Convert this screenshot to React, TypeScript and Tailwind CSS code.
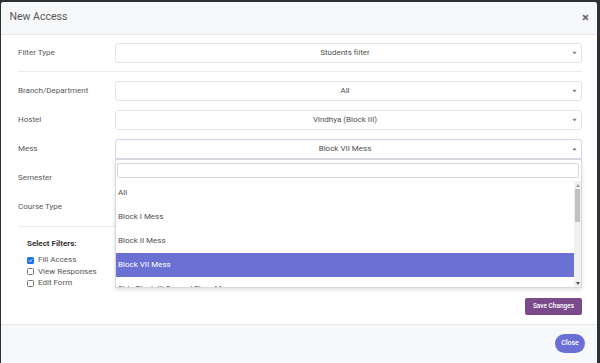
import React from 'react';

const Caret = ({ up = false }: { up?: boolean }) => (
  <svg width="5" height="3" viewBox="0 0 5 3" className="absolute right-[4px] top-1/2 -translate-y-1/2">
    <path d={up ? 'M0 3 L2.5 0 L5 3 Z' : 'M0 0 L2.5 3 L5 0 Z'} fill="#888" />
  </svg>
);

function Select({ value, open = false }: { value?: string; open?: boolean }) {
  return (
    <div
      className={`relative flex h-[20px] flex-1 items-center justify-center rounded-[3px] border bg-white pr-[7px] text-[8px] text-[#505050] ${
        open ? 'rounded-b-none border-[#d4d4ec]' : 'border-[#e3e3ee]'
      }`}
    >
      {value}
      <Caret up={open} />
    </div>
  );
}

function Row({ label, children }: { label: string; children: React.ReactNode }) {
  return (
    <div className="flex h-[20px] items-center">
      <div className="w-[97px] text-[8px] text-[#595959]">{label}</div>
      {children}
    </div>
  );
}

function Check({ label, checked = false }: { label: string; checked?: boolean }) {
  return (
    <div className="flex h-[11.5px] items-center gap-[4px]">
      {checked ? (
        <span className="flex h-[7px] w-[7px] items-center justify-center rounded-[1.5px] bg-[#1f74e8]">
          <svg width="5" height="5" viewBox="0 0 10 10">
            <path d="M2 5.2 L4.2 7.4 L8.2 2.8" stroke="white" strokeWidth="1.8" fill="none" />
          </svg>
        </span>
      ) : (
        <span className="h-[7px] w-[7px] rounded-[1.5px] border border-[#767676] bg-white" />
      )}
      <span className="text-[8px] text-[#555]">{label}</span>
    </div>
  );
}

const messes = ['All', 'Block I Mess', 'Block II Mess', 'Block VII Mess', 'Side Block III Second Floor Mess'];

export default function App() {
  return (
    <div className="h-[363px] w-[600px] overflow-hidden bg-[#2f3033] pl-px pt-[2px] font-['Roboto',sans-serif]">
      <div className="flex h-[400px] w-[596px] flex-col rounded-[3px] bg-white">
        <header className="flex h-[33px] shrink-0 items-center justify-between rounded-t-[3px] border-b border-[#e6e8ec] bg-[#f7f8fa] pb-[2px] pl-[8.5px] pr-[7px]">
          <h1 className="text-[10.5px] text-[#555]">New Access</h1>
          <svg width="7" height="7" viewBox="0 0 10 10" className="mr-px">
            <path d="M1.5 1.5 L8.5 8.5 M8.5 1.5 L1.5 8.5" stroke="#6f6f6f" strokeWidth="2.6" />
          </svg>
        </header>

        <div className="flex flex-col pb-[9px] pl-[17px] pr-[15px] pt-[8px]">
          <Row label="Filter Type">
            <Select value="Students filter" />
          </Row>
          <div className="mb-[9px] mt-[8px] h-px bg-[#e9ebef]" />

          <div className="flex flex-col gap-[9px]">
            <Row label="Branch/Department">
              <Select value="All" />
            </Row>
            <Row label="Hostel">
              <Select value="Vindhya (Block III)" />
            </Row>
            <div className="relative z-10">
              <Row label="Mess">
                <div className="relative flex-1 self-stretch">
                  <Select value="Block VII Mess" open />
                  <div className="absolute left-0 right-0 top-[20px] flex h-[129px] flex-col border border-[#d9d9d9] bg-white shadow-[0_2px_4px_rgba(0,0,0,0.12)]">
                    <div className="pb-[3px] pl-px pr-[2px] pt-[3px]">
                      <div className="h-[15px] rounded-[2px] border border-[#d6d6d6]" />
                    </div>
                    <div className="flex min-h-0 flex-1">
                      <ul className="flex-1 overflow-hidden">
                        {messes.map((m) => (
                          <li
                            key={m}
                            className={`flex h-[24px] shrink-0 items-center pl-[2px] text-[8px] ${
                              m === 'Block VII Mess' ? 'bg-[#6a71d3] text-white' : 'text-[#505050]'
                            }`}
                          >
                            {m}
                          </li>
                        ))}
                      </ul>
                      <div className="flex w-[7px] flex-col items-center bg-[#f1f1f1] pt-[3px]">
                        <svg width="4" height="3" viewBox="0 0 4 3">
                          <path d="M0 3 L2 0 L4 3 Z" fill="#a3a3a3" />
                        </svg>
                        <div className="mt-[2px] h-[33px] w-[5px] bg-[#c1c1c1]" />
                        <div className="flex-1" />
                        <svg width="4" height="3" viewBox="0 0 4 3" className="mb-[2px]">
                          <path d="M0 0 L2 3 L4 0 Z" fill="#505050" />
                        </svg>
                      </div>
                    </div>
                  </div>
                </div>
              </Row>
            </div>
            <Row label="Semester">
              <Select value="All" />
            </Row>
            <Row label="Course Type">
              <Select value="All" />
            </Row>
          </div>
          <div className="mt-[9px] h-px bg-[#e9ebef]" />

          <div className="ml-[9px] mt-[12px] flex flex-col">
            <div className="text-[8px] font-bold leading-[10px] text-[#333]">Select Filters:</div>
            <div className="mt-[5.5px] flex flex-col">
              <Check label="Fill Access" checked />
              <Check label="View Responses" />
              <Check label="Edit Form" />
            </div>
          </div>

          <div className="mt-[9px] flex justify-end">
            <button className="h-[17px] w-[57px] rounded-[2px] bg-[#7a4a8b] text-[6.5px] font-medium text-white">
              Save Changes
            </button>
          </div>
        </div>

        <footer className="flex flex-1 justify-end border-t border-[#e6e8ec] bg-[#f7f8fa] pr-[12px] pt-[9px]">
          <button className="h-[19px] w-[30px] rounded-full bg-[#6a6fd6] text-[7px] font-medium text-white">
            Close
          </button>
        </footer>
      </div>
    </div>
  );
}
